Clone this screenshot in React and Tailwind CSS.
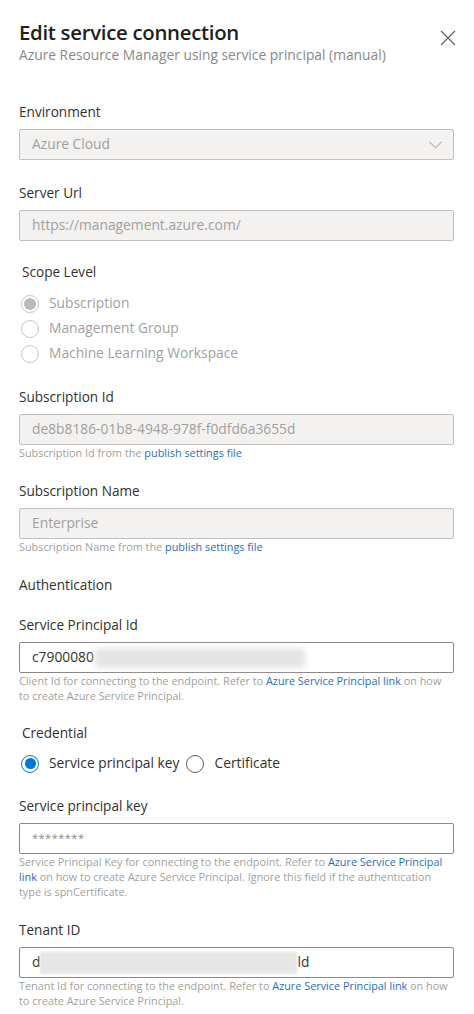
import React from 'react';

const Label = ({ children, indent }) => (
  <div className={`text-[13.6px] leading-[20px] text-[#323130] ${indent ? 'pl-[3px]' : ''}`}>{children}</div>
);

const Help = ({ children }) => <div className="text-[10.85px] leading-[15px] text-[#a19f9d]">{children}</div>;

const A = ({ children }) => <span className="text-[#2a6db5]">{children}</span>;

const Disabled = ({ children, chevron }) => (
  <div className="mt-[7px] h-[31px] flex items-center justify-between rounded-[2px] border border-[#c2c0be] bg-[#f3f2f1] pl-[12px] pr-[11px] text-[13.8px] text-[#a19f9d]">
    <span>{children}</span>
    {chevron && (
      <svg width="13" height="8" viewBox="0 0 13 8" fill="none" stroke="#b3b0ad" strokeWidth="1.1">
        <path d="M0.5 0.8 L6.5 6.8 L12.5 0.8" />
      </svg>
    )}
  </div>
);

const Input = ({ children }) => (
  <div className="mt-[7px] h-[31px] flex items-center rounded-[2px] border border-[#8a8886] bg-white pl-[12px] text-[13.8px] text-[#323130]">
    {children}
  </div>
);

const Radio = ({ checked, disabled, children }) => {
  if (disabled) {
    return (
      <div className="h-[25px] flex items-center gap-[10px]">
        <span className="w-[18px] h-[18px] rounded-full border border-[#c8c6c4] flex items-center justify-center">
          {checked && <span className="w-[12px] h-[12px] rounded-full bg-[#bdbbb9]" />}
        </span>
        <span className="text-[13.8px] text-[#a19f9d]">{children}</span>
      </div>
    );
  }
  return (
    <div className="h-[25px] flex items-center gap-[10px]">
      <span
        className={`w-[18px] h-[18px] rounded-full border flex items-center justify-center ${
          checked ? 'border-[#0078d4] border-[1.5px]' : 'border-[#605e5c]'
        }`}
      >
        {checked && <span className="w-[11px] h-[11px] rounded-full bg-[#0078d4]" />}
      </span>
      <span className="text-[13.8px] text-[#323130]">{children}</span>
    </div>
  );
};

export default function App() {
  return (
    <div className="w-[474px] h-[1014px] overflow-hidden bg-white pl-[19px] pr-[20px] pt-[19px] font-['Segoe_UI','Open_Sans',sans-serif]">
      {/* header */}
      <div className="flex items-start justify-between">
        <div>
          <div className="text-[20.4px] leading-[26px] tracking-[-0.3px] font-semibold text-[#201f1e]">
            Edit service connection
          </div>
          <div className="text-[13.8px] leading-[20px] text-[#8a8886]">
            Azure Resource Manager using service principal (manual)
          </div>
        </div>
        <button className="mt-[11px] mr-[-2px] w-[16px] h-[16px] text-[#605e5c]">
          <svg viewBox="0 0 16 16" width="16" height="16" fill="none" stroke="currentColor" strokeWidth="1.1">
            <path d="M1 1 L15 15 M15 1 L1 15" />
          </svg>
        </button>
      </div>

      <div className="mt-[37px]">
        <Label>Environment</Label>
        <Disabled chevron>Azure Cloud</Disabled>
      </div>

      <div className="mt-[23px]">
        <Label>Server Url</Label>
        <Disabled>https://management.azure.com/</Disabled>
      </div>

      <div className="mt-[21px]">
        <Label indent>Scope Level</Label>
        <div className="mt-[9px] pl-[2px]">
          <Radio disabled checked>Subscription</Radio>
          <Radio disabled>Management Group</Radio>
          <Radio disabled>Machine Learning Workspace</Radio>
        </div>
      </div>

      <div className="mt-[21px]">
        <Label>Subscription Id</Label>
        <Disabled>de8b8186-01b8-4948-978f-f0dfd6a3655d</Disabled>
        <Help>
          Subscription Id from the <A>publish settings file</A>
        </Help>
      </div>

      <div className="mt-[21px]">
        <Label>Subscription Name</Label>
        <Disabled>Enterprise</Disabled>
        <Help>
          Subscription Name from the <A>publish settings file</A>
        </Help>
      </div>

      <div className="mt-[21px]">
        <Label>Authentication</Label>
      </div>

      <div className="mt-[20px]">
        <Label>Service Principal Id</Label>
        <Input>
          <span>c7900080</span>
          <span className="ml-[1px] inline-block w-[210px] h-[20px] bg-[#e4e4e4] blur-[3px]" />
        </Input>
        <Help>
          Client Id for connecting to the endpoint. Refer to <A>Azure Service Principal link</A> on how
          <br />
          to create Azure Service Principal.
        </Help>
      </div>

      <div className="mt-[20px]">
        <Label indent>Credential</Label>
        <div className="mt-[8px] pl-[2px] flex items-center gap-[7px]">
          <Radio checked>Service principal key</Radio>
          <Radio>Certificate</Radio>
        </div>
      </div>

      <div className="mt-[20px]">
        <Label>Service principal key</Label>
        <Input>
          <span className="text-[11px] tracking-[0.5px] text-[#8a8886]">********</span>
        </Input>
        <Help>
          Service Principal Key for connecting to the endpoint. Refer to <A>Azure Service Principal</A>
          <br />
          <A>link</A> on how to create Azure Service Principal. Ignore this field if the authentication
          <br />
          type is spnCertificate.
        </Help>
      </div>

      <div className="mt-[21px]">
        <Label>Tenant ID</Label>
        <Input>
          <span>d</span>
          <span className="inline-block w-[257px] h-[22px] bg-[#e6e6e6] blur-[1px]" />
          <span>ld</span>
        </Input>
        <Help>
          Tenant Id for connecting to the endpoint. Refer to <A>Azure Service Principal link</A> on how
          <br />
          to create Azure Service Principal.
        </Help>
      </div>
    </div>
  );
}
